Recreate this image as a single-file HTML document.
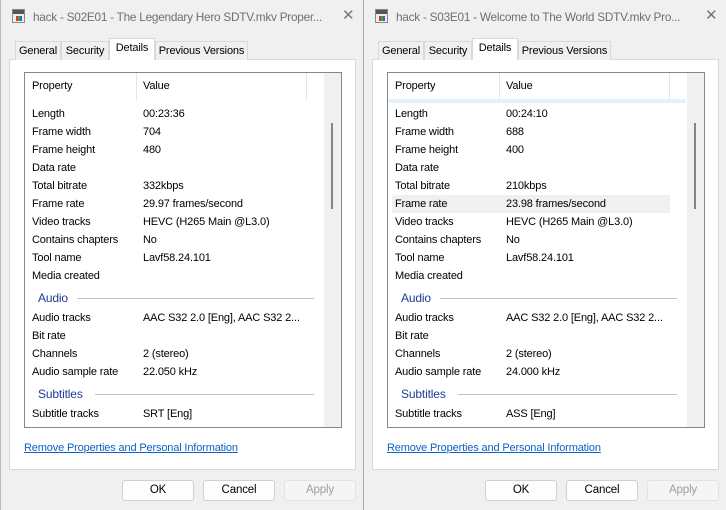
<!DOCTYPE html><html><head><style>
*{margin:0;padding:0;box-sizing:border-box}
body{width:726px;height:510px;background:#f0f0f0;font-family:"Liberation Sans",sans-serif;font-size:11px;letter-spacing:-0.15px;color:#000;position:relative;overflow:hidden}
.d{position:absolute;top:0;width:363px;height:510px;border-left:1px solid #aaa}
.a{position:absolute;white-space:nowrap}
.title{top:10px;left:32px;color:#6f6f6f;font-size:11.8px;letter-spacing:-0.25px}
.x{top:6px;left:341px;color:#777;font-size:15px}
.tab{top:41px;height:19px;border:1px solid #d9d9d9;border-bottom:none;background:#f0f0f0;padding:3px 0 0;text-align:center}
.tab.s{top:38px;height:22px;background:#fff;z-index:2}
.panel{left:8px;top:59px;width:347px;height:411px;background:#fff;border:1px solid #d9d9d9}
.lv{left:23px;top:72px;width:318px;height:356px;border:1px solid #828790;background:#fff;overflow:hidden}
.sb{position:absolute;left:299px;top:0;width:18px;height:354px;background:#f0f0f0}
.th{position:absolute;top:50px;width:2px;height:86px;background:#858585}
.hd{position:absolute;top:0;left:0;width:282px;height:28px}
.hd span{position:absolute;top:7px}
.sep{position:absolute;top:0;width:1px;height:27px;background:#e5e5e5}
.r{position:absolute;left:0;width:282px;height:18px}
.r span{position:absolute;top:3px}
.g{position:absolute;left:13px;color:#1e3c96;font-size:12px}
.gl{position:absolute;height:1px;background:#b9c3d9}
.link{left:23px;top:442px;color:#0b62c6;text-decoration:underline}
.btn{top:480px;width:72px;height:21px;border:1px solid #d0d0d0;background:#fdfdfd;border-radius:3px;text-align:center;line-height:19px;font-size:11.5px}
.btn.dis{color:#9d9d9d;background:#f5f5f5;border-color:#e3e3e3}
.ic{top:9px;left:11px;width:13px;height:14px;border:1px solid #888;background:linear-gradient(#555 0 4px,#eee 4px)}
.ic:after{content:"";position:absolute;left:3px;top:6px;width:6px;height:5px;background:linear-gradient(90deg,#d33 0 33%,#3a3 33% 66%,#36c 66%)}
</style></head><body>

<div class="d" style="left:0;border-left:1px solid #bbb">
<div class="a ic"></div>
<div class="a title">hack - S02E01 - The Legendary Hero SDTV.mkv Proper...</div>
<div class="a x">✕</div>
<div class="a panel"></div>
<div class="a tab" style="left:14px;width:46px">General</div>
<div class="a tab" style="left:60px;width:48px">Security</div>
<div class="a tab s" style="left:108px;width:46px">Details</div>
<div class="a tab" style="left:154px;width:93px">Previous Versions</div>
<div class="a lv">
 <div class="sb"></div><div class="th" style="left:306px"></div>
 <div class="hd"><span style="left:7px">Property</span><div class="sep" style="left:111px"></div><span style="left:118px">Value</span><div class="sep" style="left:281px"></div></div>
 <div class="r" style="top:32px"><span style="left:7px">Length</span><span style="left:118px">00:23:36</span></div>
 <div class="r" style="top:50px"><span style="left:7px">Frame width</span><span style="left:118px">704</span></div>
 <div class="r" style="top:68px"><span style="left:7px">Frame height</span><span style="left:118px">480</span></div>
 <div class="r" style="top:86px"><span style="left:7px">Data rate</span></div>
 <div class="r" style="top:104px"><span style="left:7px">Total bitrate</span><span style="left:118px">332kbps</span></div>
 <div class="r" style="top:122px"><span style="left:7px">Frame rate</span><span style="left:118px">29.97 frames/second</span></div>
 <div class="r" style="top:140px"><span style="left:7px">Video tracks</span><span style="left:118px">HEVC (H265 Main @L3.0)</span></div>
 <div class="r" style="top:158px"><span style="left:7px">Contains chapters</span><span style="left:118px">No</span></div>
 <div class="r" style="top:176px"><span style="left:7px">Tool name</span><span style="left:118px">Lavf58.24.101</span></div>
 <div class="r" style="top:194px"><span style="left:7px">Media created</span></div>
 <div class="g" style="top:218px">Audio</div><div class="gl" style="top:225px;left:52px;width:237px"></div>
 <div class="r" style="top:236px"><span style="left:7px">Audio tracks</span><span style="left:118px">AAC S32 2.0 [Eng], AAC S32 2...</span></div>
 <div class="r" style="top:254px"><span style="left:7px">Bit rate</span></div>
 <div class="r" style="top:272px"><span style="left:7px">Channels</span><span style="left:118px">2 (stereo)</span></div>
 <div class="r" style="top:290px"><span style="left:7px">Audio sample rate</span><span style="left:118px">22.050 kHz</span></div>
 <div class="g" style="top:314px">Subtitles</div><div class="gl" style="top:321px;left:70px;width:219px"></div>
 <div class="r" style="top:332px"><span style="left:7px">Subtitle tracks</span><span style="left:118px">SRT [Eng]</span></div>
</div>
<div class="a link">Remove Properties and Personal Information</div>
<div class="a btn" style="left:121px">OK</div>
<div class="a btn" style="left:202px">Cancel</div>
<div class="a btn dis" style="left:283px">Apply</div>
</div>

<div class="d" style="left:363px">
<div class="a ic"></div>
<div class="a title">hack - S03E01 - Welcome to The World SDTV.mkv Pro...</div>
<div class="a x">✕</div>
<div class="a panel"></div>
<div class="a tab" style="left:14px;width:46px">General</div>
<div class="a tab" style="left:60px;width:48px">Security</div>
<div class="a tab s" style="left:108px;width:46px">Details</div>
<div class="a tab" style="left:154px;width:93px">Previous Versions</div>
<div class="a lv">
 <div class="sb"></div><div class="th" style="left:306px"></div>
 <div class="hd"><span style="left:7px">Property</span><div class="sep" style="left:111px"></div><span style="left:118px">Value</span><div class="sep" style="left:281px"></div></div>
 <div style="position:absolute;top:26px;left:0;width:298px;height:4px;background:#e5f1fb"></div>
 <div class="r" style="top:32px"><span style="left:7px">Length</span><span style="left:118px">00:24:10</span></div>
 <div class="r" style="top:50px"><span style="left:7px">Frame width</span><span style="left:118px">688</span></div>
 <div class="r" style="top:68px"><span style="left:7px">Frame height</span><span style="left:118px">400</span></div>
 <div class="r" style="top:86px"><span style="left:7px">Data rate</span></div>
 <div class="r" style="top:104px"><span style="left:7px">Total bitrate</span><span style="left:118px">210kbps</span></div>
 <div class="r" style="top:122px;background:#f0f0f0;left:4px;width:278px"><span style="left:3px">Frame rate</span><span style="left:114px">23.98 frames/second</span></div>
 <div class="r" style="top:140px"><span style="left:7px">Video tracks</span><span style="left:118px">HEVC (H265 Main @L3.0)</span></div>
 <div class="r" style="top:158px"><span style="left:7px">Contains chapters</span><span style="left:118px">No</span></div>
 <div class="r" style="top:176px"><span style="left:7px">Tool name</span><span style="left:118px">Lavf58.24.101</span></div>
 <div class="r" style="top:194px"><span style="left:7px">Media created</span></div>
 <div class="g" style="top:218px">Audio</div><div class="gl" style="top:225px;left:52px;width:237px"></div>
 <div class="r" style="top:236px"><span style="left:7px">Audio tracks</span><span style="left:118px">AAC S32 2.0 [Eng], AAC S32 2...</span></div>
 <div class="r" style="top:254px"><span style="left:7px">Bit rate</span></div>
 <div class="r" style="top:272px"><span style="left:7px">Channels</span><span style="left:118px">2 (stereo)</span></div>
 <div class="r" style="top:290px"><span style="left:7px">Audio sample rate</span><span style="left:118px">24.000 kHz</span></div>
 <div class="g" style="top:314px">Subtitles</div><div class="gl" style="top:321px;left:70px;width:219px"></div>
 <div class="r" style="top:332px"><span style="left:7px">Subtitle tracks</span><span style="left:118px">ASS [Eng]</span></div>
</div>
<div class="a link">Remove Properties and Personal Information</div>
<div class="a btn" style="left:121px">OK</div>
<div class="a btn" style="left:202px">Cancel</div>
<div class="a btn dis" style="left:283px">Apply</div>
</div>
</body></html>
